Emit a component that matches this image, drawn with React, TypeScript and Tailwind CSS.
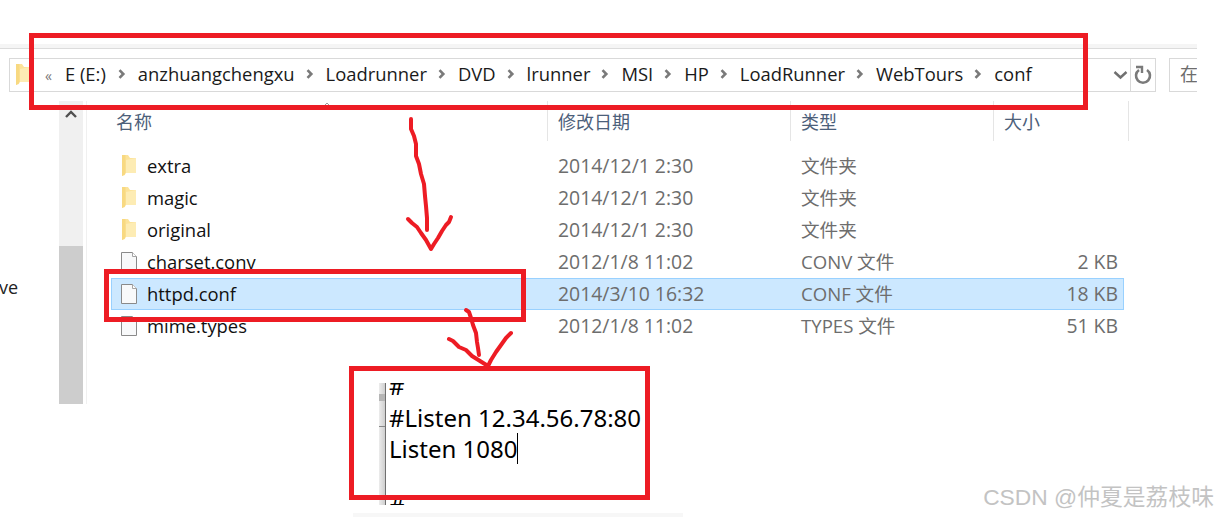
const crumbs = ['anzhuangchengxu', 'Loadrunner', 'DVD', 'lrunner', 'MSI', 'HP', 'LoadRunner', 'WebTours', 'conf'];

const files = [
  { name: 'extra', date: '2014/12/1 2:30', type: '文件夹', size: '', folder: true },
  { name: 'magic', date: '2014/12/1 2:30', type: '文件夹', size: '', folder: true },
  { name: 'original', date: '2014/12/1 2:30', type: '文件夹', size: '', folder: true },
  { name: 'charset.conv', date: '2012/1/8 11:02', type: 'CONV 文件', size: '2 KB', folder: false },
  { name: 'httpd.conf', date: '2014/3/10 16:32', type: 'CONF 文件', size: '18 KB', folder: false, selected: true },
  { name: 'mime.types', date: '2012/1/8 11:02', type: 'TYPES 文件', size: '51 KB', folder: false },
];

function FolderIcon({ className }: { className?: string }) {
  return (
    <svg className={className} width="15" height="21" viewBox="0 0 15 21">
      <path d="M0 0h6l2 3h6v15H3v2l-3 1z" fill="#fce39a" />
      <path d="M4 5l10-2v15H4z" fill="#fdecb4" />
      <path d="M0 0h3.5v19L0 21z" fill="#f8d981" />
    </svg>
  );
}

function FileIcon() {
  return (
    <svg width="18" height="22" viewBox="0 0 18 22">
      <path d="M1.5 1.5h11l4 4v15h-15z" fill="#f8f9fa" stroke="#8a8a8a" />
      <path d="M12.5 1.5v4h4" fill="#fff" stroke="#a5a5a5" />
    </svg>
  );
}

function Chevron() {
  return (
    <svg width="8" height="10" viewBox="0 0 8 10" className="shrink-0">
      <path d="M1.5 1.2l3.8 3.8-3.8 3.8" fill="none" stroke="#7a7a7a" strokeWidth="2.6" />
    </svg>
  );
}

function Annotations() {
  const red = '#ed1c24';
  return (
    <svg className="absolute left-0 top-0 pointer-events-none" width="1218" height="517" viewBox="0 0 1218 517">
      <g fill="none" stroke={red} strokeWidth="5">
        <rect x="31.5" y="35.5" width="1054" height="72" />
        <rect x="106.5" y="271.5" width="417" height="48" />
        <rect x="351.5" y="368.5" width="296" height="129" />
      </g>
      <g fill="none" stroke={red} strokeWidth="4" strokeLinecap="round" strokeLinejoin="round">
        <path d="M411 119l0 10 3 7 2 8 0 12 3 8 2 10 3 10 1 12 1 10 1 12 0 12" />
        <path d="M408 219l4 4 5 4 4 6 5 7 5 9 3-5 4-6 4-7 4-6 3-3 2-5" />
        <path d="M466 310l3 2 2 6 2 7 3 8 1 9 1 6 1 7" />
        <path d="M449 339l4 2 6 6 7 3 6 6 8 5 8 5 3-6 5-8 5-7 5-7 5-5" />
      </g>
    </svg>
  );
}

export default function App() {
  return (
    <div className="relative w-[1218px] h-[517px] overflow-hidden bg-white text-black font-['Open_Sans','Noto_Sans_CJK_SC',sans-serif]">
      {/* stray text from the window behind */}
      <span className="absolute left-0 top-[277px] -ml-[1px] text-[18px] leading-5 text-[#222]">ve</span>

      <div className="pt-[44px] w-[1197px]">
        <div className="h-[5px] bg-[#f5f5f5] border-b border-[#dcdcdc]" />

        {/* address bar */}
        <div className="flex items-center mt-[9px] ml-[9px] h-[34px]">
          <div className="flex items-center w-[1121px] h-full border border-[#d9d9d9] border-r-0 bg-white">
            <FolderIcon className="ml-[6px] -mt-[1px]" />
            <span className="ml-[14px] text-[14px] text-[#777]">«</span>
            <div className="flex items-center ml-[13px] -mt-[2px] gap-[11px] text-[18.4px] text-[#1a1a1a] whitespace-nowrap">
              <span className="mr-[1px]">E (E:)</span>
              {crumbs.map((c) => (
                <div key={c} className="flex items-center gap-[12px]">
                  <Chevron />
                  <span>{c}</span>
                </div>
              ))}
            </div>
            <svg className="ml-auto mr-[2px]" width="15" height="10" viewBox="0 0 15 10">
              <path d="M1.5 2l6 5.5 6-5.5" fill="none" stroke="#707070" strokeWidth="2.4" />
            </svg>
          </div>
          <div className="flex items-center justify-center w-[26px] h-full border border-[#d9d9d9] bg-white">
            <svg width="18" height="20" viewBox="0 0 18 20">
              <path d="M5 5a7 7 0 1 0 8 0" fill="none" stroke="#7a7a7a" strokeWidth="2.6" />
              <path d="M2 2h6v6" fill="none" stroke="#7a7a7a" strokeWidth="2.4" />
            </svg>
          </div>
          <div className="ml-[13px] flex-1 h-full border border-[#d9d9d9] border-r-0 pl-[10px] text-[18px] leading-[31px] text-[#6d6d6d] overflow-hidden">
            在
          </div>
        </div>

        {/* file pane */}
        <div className="flex mt-[9px] ml-[59px] h-[303px]">
          <div className="flex flex-col w-[24px] shrink-0 bg-[#f0f0f0]">
            <div className="flex justify-center pt-[9px] h-[145px]">
              <svg width="12" height="8" viewBox="0 0 12 8">
                <path d="M1 7l5-5 5 5" fill="none" stroke="#505050" strokeWidth="2.4" />
              </svg>
            </div>
            <div className="flex-1 bg-[#cdcdcd]" />
          </div>
          <div className="w-[1044px] shrink-0 ml-[3px] border-l border-[#f0f0f0] pl-[24px]">
            <div className="flex h-[40px] text-[18px] text-[#4c607a] leading-[42px]">
              <div className="relative w-[437px] pl-[5px] border-r border-[#e5e5e5] h-[40px]">
                名称
                <svg className="absolute left-[212px] top-[1px]" width="8" height="5" viewBox="0 0 8 5">
                  <path d="M1 4l3-3 3 3" fill="none" stroke="#9a9a9a" strokeWidth="1" />
                </svg>
              </div>
              <div className="w-[243px] pl-[10px] border-r border-[#e5e5e5] h-[40px]">修改日期</div>
              <div className="w-[203px] pl-[10px] border-r border-[#e5e5e5] h-[40px]">类型</div>
              <div className="w-[135px] pl-[10px] border-r border-[#e5e5e5] h-[40px]">大小</div>
            </div>
            <div className="pt-[9px]">
              {files.map((f) => (
                <div
                  key={f.name}
                  className={
                    f.selected
                      ? 'flex items-center h-[32px] w-[1013px] bg-[#cce8ff] border border-[#99d1ff]'
                      : 'flex items-center h-[32px] w-[1013px] border border-transparent'
                  }
                >
                  <div className="flex items-center w-[446px] pl-[7px]">
                    <div className="flex justify-center w-[20px] mr-[8px] shrink-0">
                      {f.folder ? <FolderIcon /> : <FileIcon />}
                    </div>
                    <span className="text-[18.4px] text-[#111]">{f.name}</span>
                  </div>
                  <div className="w-[243px] text-[19.4px] text-[#6d6d6d] whitespace-nowrap">{f.date}</div>
                  <div className="w-[180px] text-[18.6px] text-[#6d6d6d] whitespace-nowrap">{f.type}</div>
                  <div className="w-[137px] text-right text-[19.4px] text-[#6d6d6d] whitespace-nowrap">{f.size}</div>
                </div>
              ))}
            </div>
          </div>
        </div>
      </div>

      {/* pasted editor crop */}
      <div className="absolute left-[379px] top-[383px] h-[122px] w-[265px] flex overflow-hidden bg-white">
        <div className="relative w-[7px] h-full bg-gradient-to-r from-[#ececec] to-[#cfcfcf] border-r border-[#707070]">
          <div className="absolute left-0 top-[11px] h-[7px] w-full bg-[#b5b5b5]" />
          <div className="absolute left-0 top-[43px] h-[1px] w-full bg-[#888]" />
        </div>
        <div className="ml-[3px] text-[24px] leading-[31px] text-black whitespace-nowrap -mt-[13px] font-['Noto_Sans',sans-serif]">
          <div className="h-[32px]">#</div>
          <div className="h-[31px]">#Listen 12.34.56.78:80</div>
          <div className="flex items-center h-[31px]">
            Listen 1080
            <span className="inline-block w-[1px] h-[31px] bg-black" />
          </div>
          <div className="mt-[27px]">#</div>
        </div>
      </div>
      <div className="absolute left-[353px] top-[513px] h-[4px] w-[330px] bg-[#f7f7f7]" />

      <Annotations />

      {/* watermark */}
      <div className="absolute right-[4px] top-[483px] text-[22.8px] leading-7 text-[#b5b5b5] opacity-80 whitespace-nowrap font-['Liberation_Sans','Noto_Sans_CJK_SC',sans-serif]">
        CSDN @仲夏是荔枝味
      </div>
    </div>
  );
}
